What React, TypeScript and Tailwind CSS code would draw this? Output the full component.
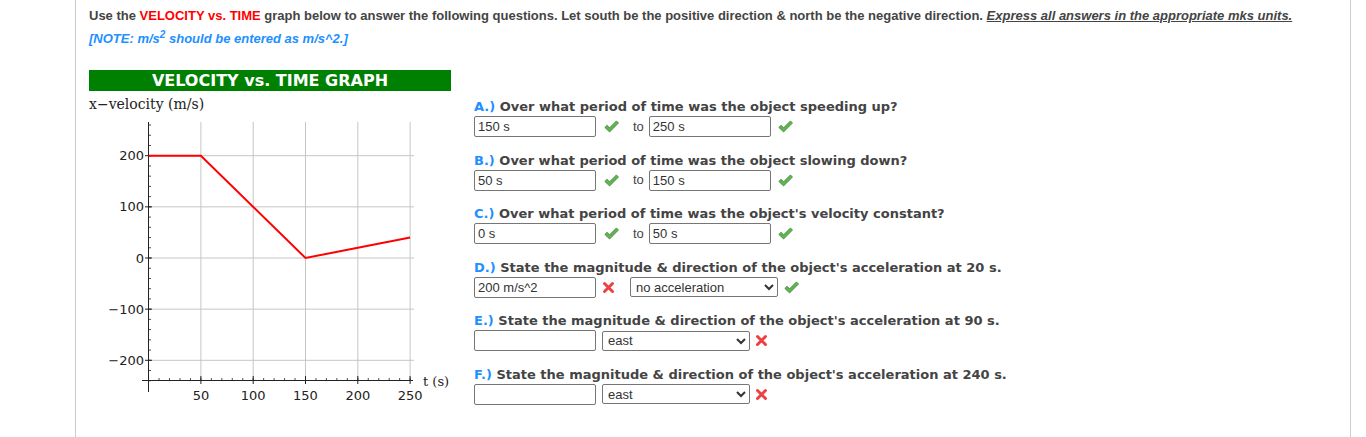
import React from "react";

const sans = { fontFamily: '"Liberation Sans", Arial, sans-serif' };
const dejavu = { fontFamily: '"DejaVu Sans", Verdana, sans-serif' };
const serif = { fontFamily: '"DejaVu Serif", serif' };

const tx = (t: number) => 149.6 + t * 1.046;
const vy = (v: number) => 258 - v * 0.5115;

function Check() {
  return (
    <svg width="15" height="13" viewBox="0 0 15 13" className="shrink-0">
      <path d="M0.8 7.4 L3.1 5.2 L5.6 7.8 L12.4 0.9 L14.5 3 L5.6 12 Z" fill="#62b354" stroke="#3f8a36" strokeWidth="0.8" strokeLinejoin="round" />
    </svg>
  );
}

function Cross() {
  return (
    <svg width="13" height="13" viewBox="0 0 13 13" className="shrink-0">
      <path d="M2.5 2.5 L10.5 10.5 M10.5 2.5 L2.5 10.5" stroke="#ec4141" strokeWidth="3" strokeLinecap="round" />
    </svg>
  );
}

function TextBox({ value = "" }: { value?: string }) {
  return (
    <input
      readOnly
      value={value}
      className="w-[122px] h-[21px] border border-[#767676] rounded-[2px] px-[3px] text-[13px] text-[#333] bg-white outline-none shrink-0"
      style={sans}
    />
  );
}

function Dropdown({ value }: { value: string }) {
  return (
    <select
      value={value}
      onChange={() => {}}
      className="w-[148px] h-[20px] border border-[#767676] rounded-[2px] pl-[1px] text-[13px] text-[#333] bg-white shrink-0"
      style={sans}
    >
      <option>east</option>
      <option>west</option>
      <option>north</option>
      <option>south</option>
      <option>no acceleration</option>
    </select>
  );
}

function Question({ letter, text }: { letter: string; text: string }) {
  return (
    <div className="h-[16px] leading-[16px] text-[13px] font-bold text-[#444] whitespace-nowrap" style={dejavu}>
      <span className="text-[#1e90ff]">{letter}.)</span> {text}
    </div>
  );
}

function Graph() {
  const yTicks = [200, 100, 0, -100, -200];
  const xTicks = [50, 100, 150, 200, 250];
  const minorY: number[] = [];
  for (let v = -240; v <= 260; v += 20) minorY.push(v);
  const minorX: number[] = [];
  for (let t = 10; t <= 250; t += 10) minorX.push(t);
  return (
    <svg width="370" height="300" className="block">
      <g transform="translate(-90,-112)">
        {yTicks.map((v) => (
          <line key={"h" + v} x1={150} x2={415} y1={vy(v)} y2={vy(v)} stroke="#c6c6c6" strokeWidth="1" />
        ))}
        {xTicks.map((t) => (
          <line key={"v" + t} x1={tx(t)} x2={tx(t)} y1={122} y2={380} stroke="#c6c6c6" strokeWidth="1" />
        ))}
        <line x1={149.5} x2={149.5} y1={122} y2={392} stroke="#222" strokeWidth="1" />
        <line x1={143} x2={414} y1={380.5} y2={380.5} stroke="#222" strokeWidth="1" />
        {minorY.map((v) => (
          <line key={"my" + v} x1={149.5} x2={152} y1={vy(v)} y2={vy(v)} stroke="#222" strokeWidth="0.8" />
        ))}
        {yTicks.map((v) => (
          <line key={"My" + v} x1={146} x2={153} y1={vy(v)} y2={vy(v)} stroke="#222" strokeWidth="1" />
        ))}
        {minorX.map((t) => (
          <line key={"mx" + t} x1={tx(t)} x2={tx(t)} y1={378} y2={380.5} stroke="#222" strokeWidth="0.8" />
        ))}
        {xTicks.map((t) => (
          <line key={"Mx" + t} x1={tx(t)} x2={tx(t)} y1={376} y2={384} stroke="#222" strokeWidth="1" />
        ))}
        <polyline
          points={`${tx(0)},${vy(200)} ${tx(50)},${vy(200)} ${tx(150)},${vy(0)} ${tx(250)},${vy(40)}`}
          fill="none"
          stroke="#ff0000"
          strokeWidth="2"
        />
        {yTicks.map((v) => (
          <text key={"ly" + v} x={145} y={vy(v) + 4.5} textAnchor="end" fontSize="13" fill="#222" style={dejavu}>
            {v < 0 ? "\u2212" + Math.abs(v) : v}
          </text>
        ))}
        {xTicks.map((t) => (
          <text key={"lx" + t} x={tx(t)} y={400} textAnchor="middle" fontSize="13" fill="#222" style={dejavu}>
            {t}
          </text>
        ))}
        <text x={424} y={386} fontSize="13" fill="#222" style={serif}>
          t (s)
        </text>
      </g>
    </svg>
  );
}

export default function App() {
  return (
    <div className="w-[1366px] h-[437px] bg-white overflow-hidden">
      <div className="ml-[75px] w-[1276px] h-[437px] border-x border-[#cccccc] px-[13px] pt-[4px]">
        <div className="leading-[23px] text-[13px] font-bold text-[#444] whitespace-nowrap" style={sans}>
          <div>
            Use the <span className="text-[#ff0000]">VELOCITY vs. TIME</span> graph below to answer the following questions. Let south be the positive direction &amp; north be the negative direction.{" "}
            <span className="italic underline">Express all answers in the appropriate mks units.</span>
          </div>
          <div className="italic text-[#1e90ff]">
            [NOTE: m/s<sup className="text-[10px]">2</sup> should be entered as m/s^2.]
          </div>
        </div>

        <div className="flex mt-[20px] gap-[23px]">
          <div className="w-[362px] shrink-0">
            <div className="h-[21px] bg-[#008000] text-white text-center text-[16px] font-bold leading-[21px]" style={dejavu}>
              VELOCITY vs. TIME GRAPH
            </div>
            <div className="h-[21px] leading-[26px] text-[14px] text-[#222]" style={serif}>
              x&minus;velocity (m/s)
            </div>
            <Graph />
          </div>

          <div className="pt-[29px] flex flex-col">
            <div className="h-[53.5px]">
              <Question letter="A" text="Over what period of time was the object speeding up?" />
              <div className="flex items-center mt-[1px]">
                <TextBox value="150 s" />
                <span className="ml-[8px]"><Check /></span>
                <span className="ml-[14px] mr-[5px] text-[13px] text-[#444]" style={sans}>to</span>
                <TextBox value="250 s" />
                <span className="ml-[7px]"><Check /></span>
              </div>
            </div>
            <div className="h-[53.5px]">
              <Question letter="B" text="Over what period of time was the object slowing down?" />
              <div className="flex items-center mt-[1px]">
                <TextBox value="50 s" />
                <span className="ml-[8px]"><Check /></span>
                <span className="ml-[14px] mr-[5px] text-[13px] text-[#444]" style={sans}>to</span>
                <TextBox value="150 s" />
                <span className="ml-[7px]"><Check /></span>
              </div>
            </div>
            <div className="h-[53.5px]">
              <Question letter="C" text="Over what period of time was the object's velocity constant?" />
              <div className="flex items-center mt-[1px]">
                <TextBox value="0 s" />
                <span className="ml-[8px]"><Check /></span>
                <span className="ml-[14px] mr-[5px] text-[13px] text-[#444]" style={sans}>to</span>
                <TextBox value="50 s" />
                <span className="ml-[7px]"><Check /></span>
              </div>
            </div>
            <div className="h-[53.5px]">
              <Question letter="D" text="State the magnitude & direction of the object's acceleration at 20 s." />
              <div className="flex items-center mt-[1px]">
                <TextBox value="200 m/s^2" />
                <span className="ml-[6px]"><Cross /></span>
                <span className="ml-[15px] flex"><Dropdown value="no acceleration" /></span>
                <span className="ml-[6px]"><Check /></span>
              </div>
            </div>
            <div className="h-[53.5px]">
              <Question letter="E" text="State the magnitude & direction of the object's acceleration at 90 s." />
              <div className="flex items-center mt-[1px]">
                <TextBox />
                <span className="ml-[6px] flex"><Dropdown value="east" /></span>
                <span className="ml-[5px]"><Cross /></span>
              </div>
            </div>
            <div className="h-[53.5px]">
              <Question letter="F" text="State the magnitude & direction of the object's acceleration at 240 s." />
              <div className="flex items-center mt-[1px]">
                <TextBox />
                <span className="ml-[6px] flex"><Dropdown value="east" /></span>
                <span className="ml-[5px]"><Cross /></span>
              </div>
            </div>
          </div>
        </div>
      </div>
    </div>
  );
}
